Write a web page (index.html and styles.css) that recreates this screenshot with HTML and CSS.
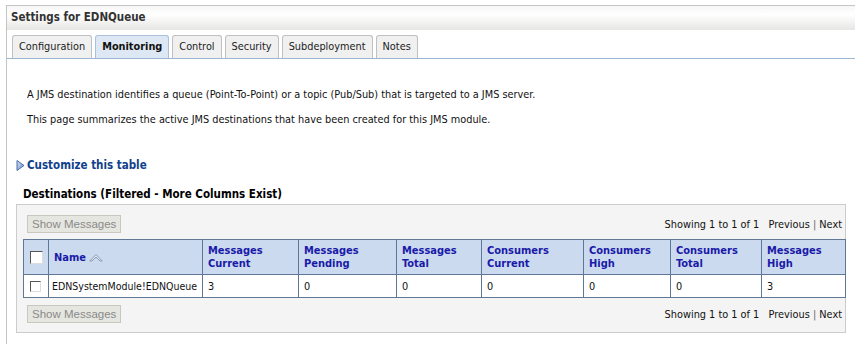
FILE: index.html
```html
<!DOCTYPE html>
<html>
<head>
<meta charset="utf-8">
<link rel="stylesheet" href="styles.css">
</head>
<body>
<div class="page">
  <div class="titlebar">Settings for EDNQueue</div>
  <div class="tabs">
    <div class="tab">Configuration</div>
    <div class="tab active">Monitoring</div>
    <div class="tab">Control</div>
    <div class="tab">Security</div>
    <div class="tab">Subdeployment</div>
    <div class="tab">Notes</div>
  </div>
  <div class="content">
    <p class="desc first">A JMS destination identifies a queue (Point-To-Point) or a topic (Pub/Sub) that is targeted to a JMS server.</p>
    <p class="desc">This page summarizes the active JMS destinations that have been created for this JMS module.</p>
    <div class="customize">
      <svg class="tri" width="9" height="11" viewBox="0 0 9 11"><defs><linearGradient id="g" x1="0" y1="0" x2="1" y2="1"><stop offset="0" stop-color="#d6e2f3"/><stop offset="1" stop-color="#6a8cc4"/></linearGradient></defs><path d="M1 0.5 L8 5.5 L1 10.5 Z" fill="url(#g)" stroke="#4a6ea8" stroke-width="1"/></svg>
      <span>Customize this table</span>
    </div>
    <div class="tabletitle">Destinations (Filtered - More Columns Exist)</div>
    <div class="box">
      <div class="controls">
        <span class="btn">Show Messages</span>
        <span class="pager">Showing 1 to 1 of 1&nbsp;&nbsp; Previous <span class="sep">|</span> Next</span>
      </div>
      <table class="grid">
        <colgroup>
          <col style="width:25px"><col style="width:154px"><col style="width:96px"><col style="width:98px"><col style="width:85px"><col style="width:102px"><col style="width:87px"><col style="width:91px"><col style="width:84px">
        </colgroup>
        <thead>
          <tr>
            <th class="cb"><span class="check"></span></th>
            <th class="name">Name <svg class="sort" width="14" height="9" viewBox="0 0 14 9"><path d="M0.8 8 L7 1.5 L13.2 8 L11 8 L7 4 L3 8 Z" fill="#e4eaf4" stroke="#8292b0" stroke-width="0.9" stroke-linejoin="round"/></svg></th>
            <th>Messages<br>Current</th>
            <th>Messages<br>Pending</th>
            <th>Messages<br>Total</th>
            <th>Consumers<br>Current</th>
            <th>Consumers<br>High</th>
            <th>Consumers<br>Total</th>
            <th>Messages<br>High</th>
          </tr>
        </thead>
        <tbody>
          <tr>
            <td class="cb"><span class="check"></span></td>
            <td class="namecell">EDNSystemModule!EDNQueue</td>
            <td>3</td><td>0</td><td>0</td><td>0</td><td>0</td><td>0</td><td>3</td>
          </tr>
        </tbody>
      </table>
      <div class="controls bottom">
        <span class="btn">Show Messages</span>
        <span class="pager">Showing 1 to 1 of 1&nbsp;&nbsp; Previous <span class="sep">|</span> Next</span>
      </div>
    </div>
  </div>
</div>
</body>
</html>
```
FILE: styles.css
```css
html, body {
  margin: 0;
  padding: 0;
  background: #ffffff;
}
body {
  font-family: "DejaVu Sans Condensed", "DejaVu Sans", sans-serif;
  font-stretch: condensed;
  font-size: 10.85px;
  color: #000;
}
.page {
  margin: 5px 0 0 6px;
  border-left: 1px solid #c4c4c4;
  height: 339px;
  box-sizing: border-box;
}
.titlebar {
  height: 24px;
  line-height: 23px;
  border-top: 1px solid #c6c6c6;
  background: linear-gradient(#f6f6f6, #ffffff 35%, #e6e6e4);
  padding-left: 4px;
  font-weight: bold;
  font-size: 11.5px;
  color: #333;
}
.tabs {
  display: flex;
  gap: 3px;
  padding: 5px 0 0 5px;
  border-bottom: 1px solid #9ab6d0;
}
.tab {
  height: 22px;
  line-height: 22px;
  padding: 0 6px;
  border: 1px solid #c0c0c0;
  border-bottom: none;
  border-radius: 3px 3px 0 0;
  background: #f0f0f0;
  color: #222;
}
.tab.active {
  background: #dde8f4;
  border-color: #a9c1da;
  font-weight: bold;
  color: #111;
}
.content {
  padding: 0 8px 0 9px;
}
.desc {
  margin: 0;
  padding-left: 11px;
  line-height: 14px;
  color: #111;
}
.desc.first {
  margin-top: 29px;
}
.desc + .desc {
  margin-top: 11px;
}
.customize {
  display: flex;
  align-items: center;
  gap: 2px;
  margin-top: 31px;
  font-weight: bold;
  font-size: 11.5px;
  color: #10418c;
}
.tri {
  display: block;
}
.tabletitle {
  margin-top: 15px;
  padding-left: 7px;
  font-weight: bold;
  font-size: 11.5px;
  color: #000;
  line-height: 14px;
}
.box {
  margin-top: 3px;
  background: #f4f4f4;
  border: 1px solid #cccccc;
  padding: 10px 0 9px 6px;
  width: 830px;
  box-sizing: border-box;
}
.controls {
  display: flex;
  justify-content: space-between;
  align-items: center;
  height: 18px;
  padding: 0 4px 0 4px;
  margin-bottom: 6px;
  width: 823px;
  box-sizing: border-box;
}
.controls.bottom {
  margin: 7px 0 0 0;
}
.btn {
  display: inline-block;
  height: 16px;
  line-height: 16px;
  padding: 0 4px;
  border: 1px solid #c8c8c0;
  background: #e6e6e0;
  color: #8a8a8a;
  font-family: "Liberation Sans", Arial, sans-serif;
  font-stretch: normal;
  font-size: 11.5px;
}
.pager {
  color: #111;
}
.sep {
  color: #666;
}
.grid {
  border-collapse: collapse;
  table-layout: fixed;
  width: 822px;
  background: #fff;
  border: 1px solid #5f7896;
}
.grid th, .grid td {
  border: 1px solid #5f7896;
  text-align: left;
  padding: 0 5px;
}
.grid th {
  background: #ccdaef;
  color: #1a1aa8;
  font-weight: bold;
  font-size: 11px;
  height: 34px;
  line-height: 13px;
  vertical-align: middle;
}
.grid td {
  height: 22px;
  color: #111;
}
.grid td.namecell {
  padding-left: 3px;
  font-size: 10.5px;
  white-space: nowrap;
}
.grid .cb {
  padding: 0 0 0 6px;
}
.grid th.name {
  white-space: nowrap;
}
.sort {
  vertical-align: -1px;
}
.check {
  display: block;
  width: 11px;
  height: 11px;
  border: 1px solid #555;
  border-right-color: #ddd;
  border-bottom-color: #ddd;
  background: #fff;
  box-sizing: border-box;
}
thead .check {
  width: 13px;
  height: 13px;
}
```
